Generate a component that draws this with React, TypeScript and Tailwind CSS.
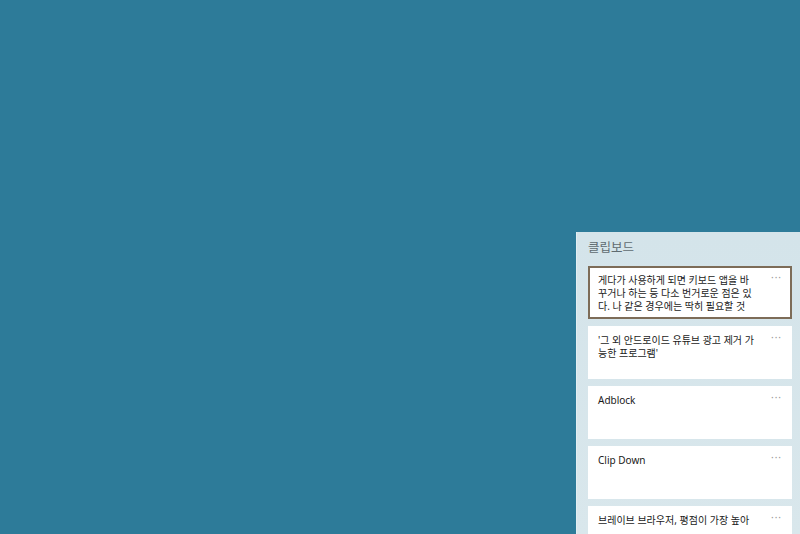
const items = [
  "게다가 사용하게 되면 키보드 앱을 바꾸거나 하는 등 다소 번거로운 점은 있다. 나 같은 경우에는 딱히 필요할 것",
  "'그 외 안드로이드 유튜브 광고 제거 가능한 프로그램'",
  "Adblock",
  "Clip Down",
  "브레이브 브라우저, 평점이 가장 높아",
];

function ClipCard({ text, selected }: { text: string; selected?: boolean }) {
  return (
    <div
      className={
        "relative h-[53px] shrink-0 bg-white pl-[8px] pr-[32px] pt-[6px] " +
        (selected ? "border-2 border-[#7d6c58]" : "border-2 border-white")
      }
    >
      <p className="text-[10px] leading-[13px] text-[#1a1a1a]">{text}</p>
      <span className="absolute right-[8px] top-[2px] text-[10px] tracking-[1px] text-[#9a9a9a]">
        ···
      </span>
    </div>
  );
}

export default function App() {
  return (
    <div
      className="flex h-[534px] w-[800px] justify-end overflow-hidden bg-[#2d7b99]"
      style={{ fontFamily: '"Noto Sans", "Noto Sans CJK KR", sans-serif' }}
    >
      <div className="mt-[232px] flex w-[224px] flex-col border-l border-[#e2eef2] bg-gradient-to-b from-[#d4e4ea] to-[#d9e7ec] pl-[11px] pr-[8px]">
        <h1 className="pt-[8px] text-[12.5px] leading-[16px] text-[#5f6b70]">클립보드</h1>
        <div className="mt-[10px] flex flex-col gap-[7px]">
          {items.map((t, i) => (
            <ClipCard key={i} text={t} selected={i === 0} />
          ))}
        </div>
      </div>
    </div>
  );
}
